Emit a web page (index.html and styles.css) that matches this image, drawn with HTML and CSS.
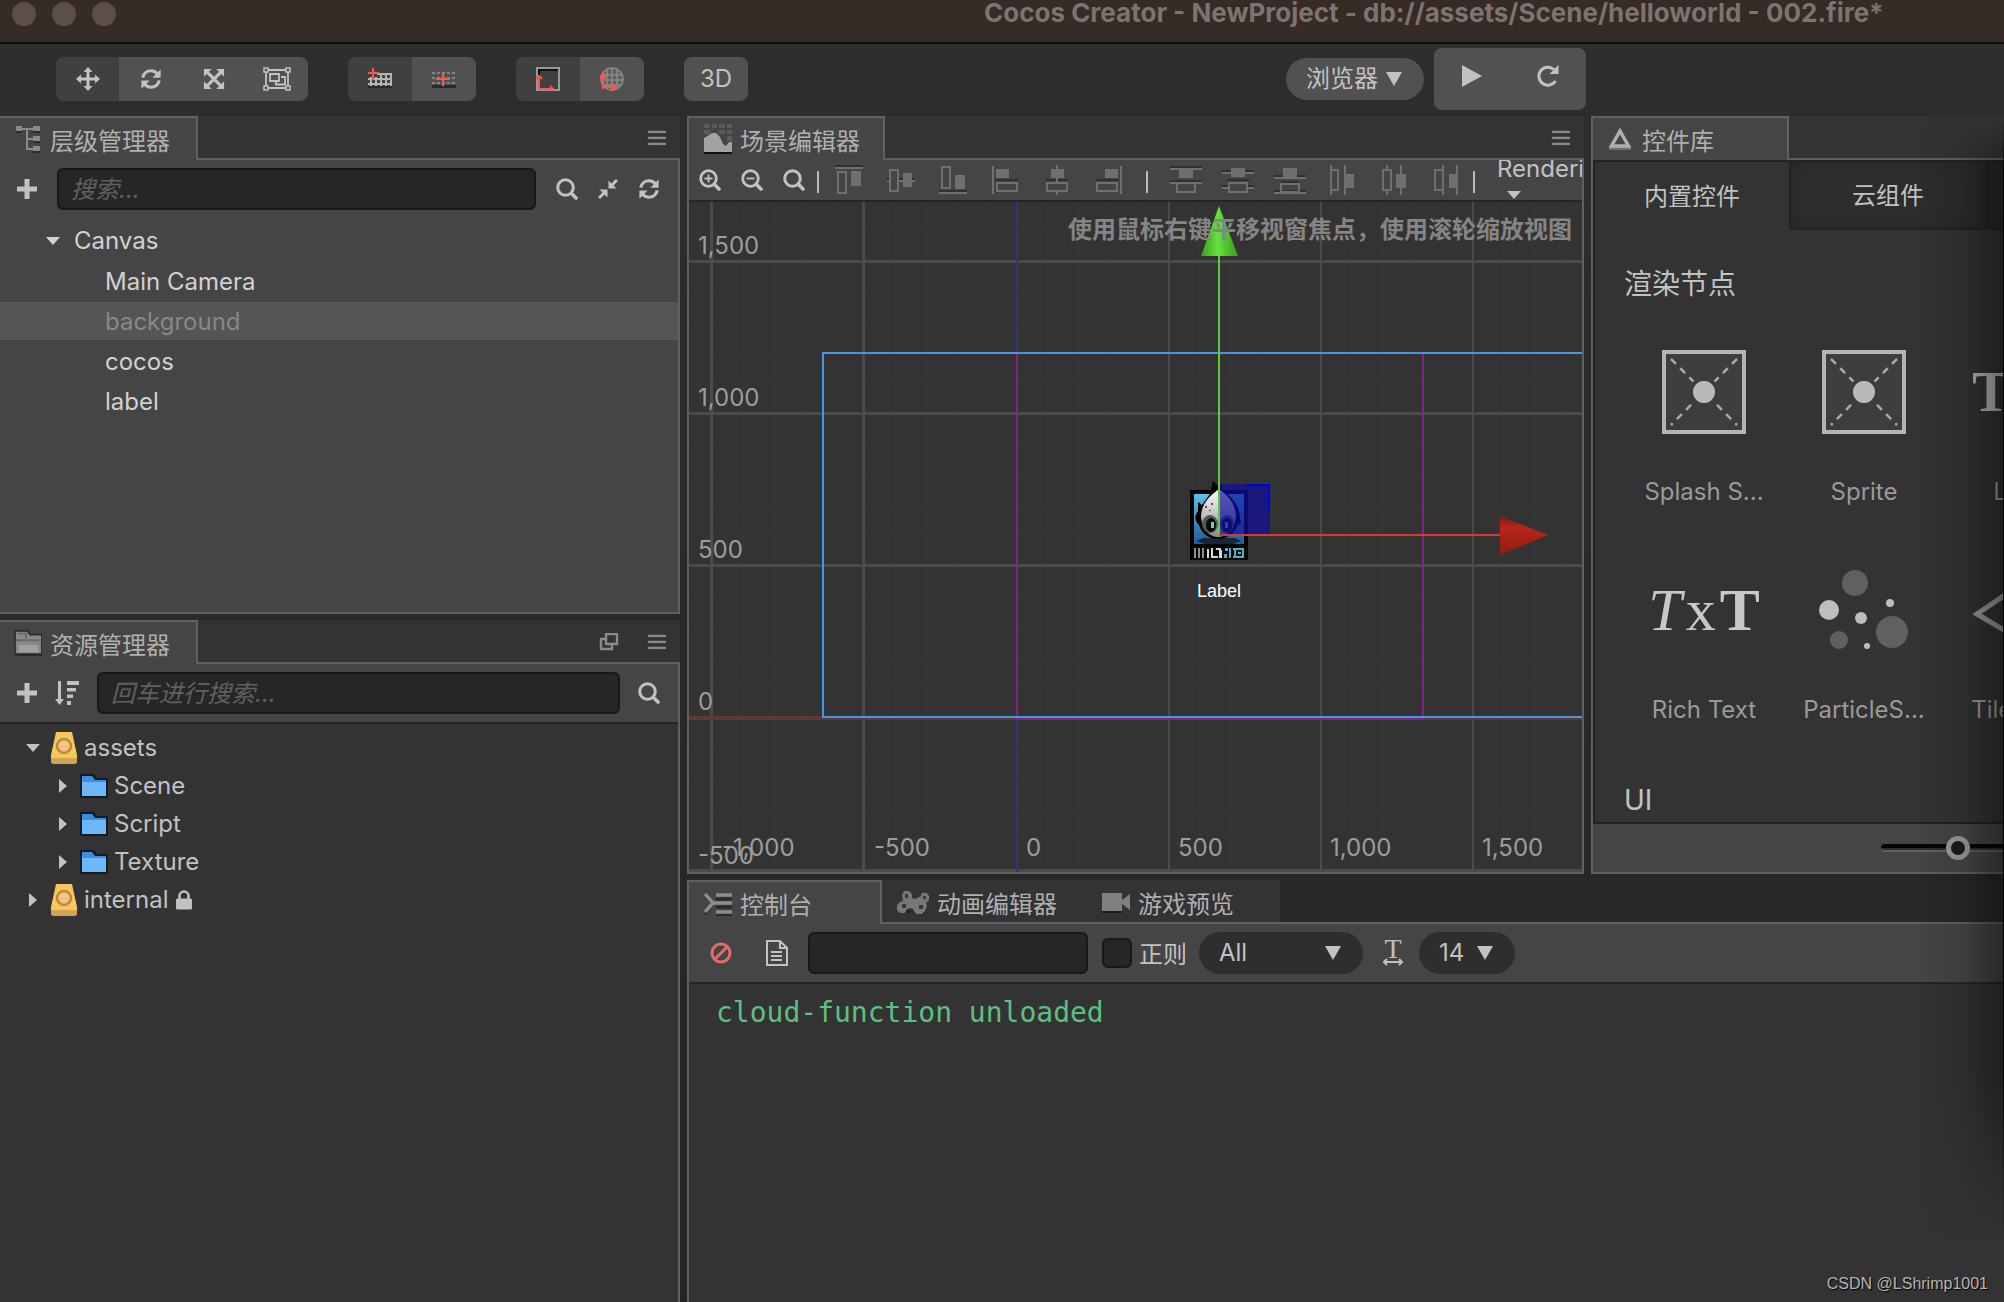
FILE: index.html
```html
<!DOCTYPE html>
<html lang="zh-CN">
<head>
  <meta charset="UTF-8" />
  <meta name="viewport" content="width=device-width, initial-scale=1.0" />
  <title>Cocos Creator - NewProject</title>
  <link rel="stylesheet" href="styles.css">
</head>
<body>
  <!-- shared icons -->
  <svg class="sprite" aria-hidden="true">
    <symbol id="i-move" viewBox="0 0 24 24"><path fill="currentColor" d="M12 0l4.500 5h-3v5.500H19V7.500l5 4.500-5 4.500v-3h-5.500V19h3L12 24l-4.500-5h3v-5.500H5v3L0 12l5-4.500v3h5.500V5h-3z"/></symbol>
    <symbol id="i-sync" viewBox="0 0 24 24"><path fill="none" stroke="currentColor" stroke-width="3.400" d="M3 10.500C4 5.500 8 3 12 3c3 0 5.500 1.400 7.500 3.800M21 13.500c-1 5-5 7.500-9 7.500-3 0-5.500-1.400-7.500-3.800"/><path fill="currentColor" d="M22.500 1.500v9h-9zM1.500 22.500v-9h9z"/></symbol>
    <symbol id="i-expand" viewBox="0 0 24 24"><path stroke="currentColor" stroke-width="3.600" d="M4 4l16 16M20 4L4 20"/><path fill="currentColor" d="M1 1h8.500L1 9.500zM23 1v8.500L14.500 1zM1 23v-8.500L9.500 23zM23 23h-8.500l8.500-8.500z"/></symbol>
    <symbol id="i-group" viewBox="0 0 28 24"><g fill="none" stroke="currentColor" stroke-width="1.800"><path d="M3 3h22v18H3z"/><path d="M7 7h9v7H7zM18 10h4v7.500h-9V15"/></g><g fill="#515151" stroke="currentColor" stroke-width="1.500"><path d="M1 1h4v4H1zM23 1h4v4h-4zM1 19h4v4H1zM23 19h4v4h-4z"/></g></symbol>
    <symbol id="i-pivot" viewBox="0 0 24 22"><path stroke="#2a2a2a" stroke-width="2" d="M0 19h24"/><path stroke="#b5b5b5" stroke-width="2" d="M3 5v13M8 5v13M13 5v13M18 5v13M23 5v13M0 6h24M0 11h24M0 16h24"/><path fill="#404040" d="M0 0h9v9H0z"/><path stroke="#f05a55" stroke-width="2" d="M5 0v12M0 5h11"/></symbol>
    <symbol id="i-center" viewBox="0 0 24 22"><path fill="#2a2a2a" d="M0 17h24v3H0z"/><path stroke="#858585" stroke-width="2" stroke-dasharray="3 2" d="M0 5h24M0 10h24M0 15h24"/><path stroke="#f05a55" stroke-width="2" d="M11 4v14M4 11h14"/></symbol>
    <symbol id="i-local" viewBox="0 0 24 24"><path fill="#404040" stroke="#999" stroke-width="2" d="M1 1h22v22H1z"/><path fill="none" stroke="#111" stroke-width="2" d="M3 22V3h19"/><path fill="none" stroke="#f05a55" stroke-width="2" d="M3 9v13h13M0 12l3-3 3 3M14 19l3 3-3 3"/></symbol>
    <symbol id="i-world" viewBox="0 0 24 24"><circle cx="12" cy="12" r="11" fill="#606060" stroke="#8a8a8a" stroke-width="1.500"/><path fill="none" stroke="#8a8a8a" stroke-width="1.500" d="M2 8h20M1 13h22M3 18h18M12 1v22M7 2v20M17 2v20"/><path fill="none" stroke="#f05a55" stroke-width="2.200" d="M3 8v14M0 11l3-4 3 4M3 20h12M12 17l4 3-4 4"/></symbol>
    <symbol id="i-play" viewBox="0 0 20 22"><path fill="currentColor" d="M0 0l20 11L0 22z"/></symbol>
    <symbol id="i-redo" viewBox="0 0 22 22"><path fill="none" stroke="currentColor" stroke-width="3" d="M18.500 16A9 9 0 1 1 17 4.500"/><path fill="currentColor" d="M21.500 0v9h-9z"/></symbol>
    <symbol id="i-caret" viewBox="0 0 16 14"><path fill="currentColor" d="M0 0h16L8 14z"/></symbol>
    <symbol id="i-open" viewBox="0 0 14 8"><path fill="currentColor" d="M0 0h14L7 8z"/></symbol>
    <symbol id="i-closed" viewBox="0 0 8 14"><path fill="currentColor" d="M0 0l8 7-8 7z"/></symbol>
    <symbol id="i-menu" viewBox="0 0 20 16"><path stroke="#222" stroke-width="2" d="M1 3h18M1 9h18M1 15h18"/><path stroke="currentColor" stroke-width="2.400" stroke-linecap="round" d="M2 2h16M2 8h16M2 14h16"/></symbol>
    <symbol id="i-popup" viewBox="0 0 20 18"><path fill="none" stroke="currentColor" stroke-width="2.400" d="M7 1h11v10H7zM7 6H2v10h11v-4"/></symbol>
    <symbol id="i-tree" viewBox="0 0 28 28"><g fill="#2c2c2c" transform="translate(2)"><path d="M0 6h6v2H0zM17 6h7v2h-7zM17 16h7v2h-7zM17 26h7v2h-7z"/></g><g fill="#8a8a8a" transform="translate(2)"><path d="M0 1h6v5H0zM17 1h7v5h-7zM17 11h7v5h-7zM17 21h7v5h-7zM6 3h11v2H6zM10 4h2v21h-2zM11 13h7v2h-7zM11 23h7v2h-7z"/></g></symbol>
    <symbol id="i-plus" viewBox="0 0 20 20"><path fill="currentColor" d="M7.500 0h5v7.500H20v5h-7.500V20h-5v-7.500H0v-5h7.500z"/></symbol>
    <symbol id="i-search" viewBox="0 0 22 22"><circle cx="9.500" cy="9.500" r="7.800" fill="none" stroke="currentColor" stroke-width="3"/><path stroke="currentColor" stroke-width="3.600" stroke-linecap="round" d="M15.500 15.500l4.500 4.500"/></symbol>
    <symbol id="i-zoomin" viewBox="0 0 22 22"><circle cx="9.500" cy="9.500" r="7.800" fill="none" stroke="currentColor" stroke-width="2.800"/><path stroke="currentColor" stroke-width="3.600" stroke-linecap="round" d="M15.500 15.500l4.500 4.500"/><path stroke="currentColor" stroke-width="1.800" d="M5.500 9.500h8M9.500 5.500v8"/></symbol>
    <symbol id="i-zoomout" viewBox="0 0 22 22"><circle cx="9.500" cy="9.500" r="7.800" fill="none" stroke="currentColor" stroke-width="2.800"/><path stroke="currentColor" stroke-width="3.600" stroke-linecap="round" d="M15.500 15.500l4.500 4.500"/><path stroke="currentColor" stroke-width="1.800" d="M5.500 9.500h8"/></symbol>
    <symbol id="i-collapse" viewBox="0 0 20 20"><path stroke="currentColor" stroke-width="3" d="M1 19l6-6M19 1l-6 6"/><path fill="currentColor" d="M1.500 10.500h8v8zM18.500 9.500h-8v-8z"/></symbol>
    <symbol id="i-folder-tab" viewBox="0 0 30 28"><path fill="#2a2a2a" d="M0 4V2l2-2h13l3 4h12v24H1z"/><path fill="#888" d="M2 25V2h12l3 4h12v19z"/><path fill="none" stroke="#696969" stroke-width="2" d="M2 11h27M4 4h9v5"/><path fill="#a0a0a0" d="M5 16h21v8H5z"/></symbol>
    <symbol id="i-sort" viewBox="0 0 24 24"><path fill="currentColor" d="M3 0h3v18h3l-4.500 6L0 18h3zM12 0h12v4H12zM12 7h9v3.500h-9zM12 13.500h6V17h-6zM12 20h4v4h-4z"/></symbol>
    <symbol id="i-db" viewBox="0 0 28 32"><path fill="#f6c75f" d="M6 0h16l5 23v7l-2 2H3l-2-2v-7z"/><path fill="#d3a451" d="M1 26h26v4l-2 2H3l-2-2z"/><circle cx="14" cy="14" r="7" fill="#f3c383" stroke="#ba8a3d" stroke-width="2.500"/></symbol>
    <symbol id="i-folder" viewBox="0 0 28 24"><path fill="#111c27" d="M0 0h14l3 4h11v20H0z"/><path fill="#3d8ee0" d="M2 2h10l3 4h11v4H2z"/><path fill="#6db8fb" d="M2 8h24v14H2z"/></symbol>
    <symbol id="i-lock" viewBox="0 0 16 20"><path fill="none" stroke="currentColor" stroke-width="2.500" d="M3.500 9V6a4.500 4.500 0 0 1 9 0v3"/><rect y="8.500" width="16" height="11" rx="1.500" fill="currentColor"/></symbol>
    <symbol id="i-scene" viewBox="0 0 28 30"><g fill="#5b5b5b"><path d="M0 0h6v4H0zM8 0h5v4H8zM15 0h6v4h-6zM23 0h5v4h-5zM0 6h6v4H0zM15 6h6v4h-6zM23 6h5v4h-5zM23 12h5v5h-5z"/></g><path fill="#111" d="M0 28h28v2H0z"/><path fill="#a2a2a2" d="M0 28V14l5-3 3-2h4l4 4 3 7 3 2 3-4h3v10z"/></symbol>
    <symbol id="i-widget" viewBox="0 0 26 24"><path fill="#707070" d="M1 19h22v4H1z"/><path fill="none" stroke="#b0b0b0" stroke-width="3.500" d="M12 4l8.500 15h-17z"/></symbol>
    <symbol id="i-console" viewBox="0 0 28 24"><path fill="none" stroke="#2a2a2a" stroke-width="3" d="M1 4l8 8-8 10M12 7h16M12 15h16M12 23h16"/><path fill="none" stroke="#8d8d8d" stroke-width="3.500" d="M1 2l8 9-8 9M12 3h16M9 11h19M12 20h16"/></symbol>
    <symbol id="i-anim" viewBox="0 0 32 24"><path fill="#242424" d="M2 19h12v3H2zM18 20h10v3H18z"/><path fill="#777" d="M7 0h5l3 3v4l3 1 6-3 1-3h5l2 3v4l-3 3 1 3-2 5-3 3h-6l-3-5-3-1-3 1-2 4H3l-3-3v-5l3-3 3-1-1-6z"/><path fill="#383838" d="M8 3h3v4H8zM5 13h4v4H5zM22 14h4v4h-4zM26 5h3v3h-3z"/></symbol>
    <symbol id="i-video" viewBox="0 0 28 20"><path fill="#1c1c1c" d="M0 17h20v3H0z"/><path fill="#808080" d="M0 0h20v18H0zM20 7l8-6v16l-8-6z"/></symbol>
    <symbol id="i-ban" viewBox="0 0 22 22"><circle cx="11" cy="11" r="9" fill="none" stroke="#e06c6c" stroke-width="3"/><path stroke="#e06c6c" stroke-width="3" d="M17 5L5 17"/></symbol>
    <symbol id="i-doc" viewBox="0 0 22 26"><path fill="none" stroke="currentColor" stroke-width="2" d="M1 1h13l7 7v17H1zM14 1v7h7M5 12h11M5 16h11M5 20h11"/></symbol>
    <symbol id="i-fontsize" viewBox="0 0 22 26"><text x="11" y="18" text-anchor="middle" font-family="Liberation Serif, serif" font-size="28" fill="#c0c0c0">T</text><path fill="none" stroke="#c0c0c0" stroke-width="2" d="M2 22h18M5 19l-3 3 3 3M17 19l3 3-3 3"/></symbol>
    <!-- align and distribute -->
    <symbol id="a-top" viewBox="0 0 28 30"><path fill="#303030" d="M0 0h28v2H0z"/><path fill="#6f6f6f" d="M0 2h28v2H0zM16 6h10v15H16z"/><path fill="none" stroke="#6f6f6f" stroke-width="2" d="M3 7h8v21H3z"/></symbol>
    <symbol id="a-mid" viewBox="0 0 28 30"><path fill="#303030" d="M0 13h28v2H0z"/><path fill="#6f6f6f" d="M0 15h28v2H0zM16 8h9v14h-9z"/><path fill="#454545" stroke="#6f6f6f" stroke-width="2" d="M3 5h8v21H3z"/></symbol>
    <symbol id="a-bottom" viewBox="0 0 28 30"><path fill="#303030" d="M0 25h28v2H0z"/><path fill="#6f6f6f" d="M0 27h28v2H0zM16 10h10v14H16z"/><path fill="none" stroke="#6f6f6f" stroke-width="2" d="M3 2h8v21H3z"/></symbol>
    <symbol id="a-left" viewBox="0 0 28 30"><path fill="#303030" d="M4 14h23v2H4z"/><path fill="#6f6f6f" d="M1 1h2v28H1zM5 4h13v9H5z"/><path fill="none" stroke="#6f6f6f" stroke-width="2" d="M6 18h20v8H6z"/></symbol>
    <symbol id="a-hmid" viewBox="0 0 28 30"><path fill="#303030" d="M3 14h23v2H3z"/><path fill="#6f6f6f" d="M13 0h2v30h-2zM8 4h13v9H8z"/><path fill="#454545" stroke="#6f6f6f" stroke-width="2" d="M4 18h20v8H4z"/></symbol>
    <symbol id="a-right" viewBox="0 0 28 30"><path fill="#303030" d="M1 14h23v2H1z"/><path fill="#6f6f6f" d="M25 1h2v28h-2zM10 4h13v9H10z"/><path fill="none" stroke="#6f6f6f" stroke-width="2" d="M2 18h20v8H2z"/></symbol>
    <symbol id="d-top" viewBox="0 0 32 30"><path fill="#303030" d="M0 1h32v2H0zM0 15h32v2H0z"/><path fill="#6f6f6f" d="M0 3h32v2H0zM0 17h32v2H0zM9 4h14v9H9z"/><path fill="none" stroke="#6f6f6f" stroke-width="2" d="M7 18h18v9H7z"/></symbol>
    <symbol id="d-mid" viewBox="0 0 32 30"><path fill="#303030" d="M0 5h32v2H0zM5 14h22v2H5zM0 20h32v2H0z"/><path fill="#6f6f6f" d="M0 7h32v2H0zM0 22h32v2H0zM9 3h14v9H9z"/><path fill="#454545" stroke="#6f6f6f" stroke-width="2" d="M7 18h18v9H7z"/></symbol>
    <symbol id="d-bottom" viewBox="0 0 32 30"><path fill="#303030" d="M0 10h32v2H0zM0 25h32v2H0zM7 16h18v2H7z"/><path fill="#6f6f6f" d="M0 12h32v2H0zM0 27h32v2H0zM9 3h14v9H9z"/><path fill="none" stroke="#6f6f6f" stroke-width="2" d="M7 19h18v8H7z"/></symbol>
    <symbol id="d-left" viewBox="0 0 28 30"><path fill="#6f6f6f" d="M2 0h2v30H2zM16 0h2v30h-2zM18 9h8v14h-8z"/><path fill="none" stroke="#6f6f6f" stroke-width="2" d="M3 5h7v20H3z"/></symbol>
    <symbol id="d-center" viewBox="0 0 28 30"><path fill="#6f6f6f" d="M6 0h2v30H6zM20 0h2v30h-2zM16 9h10v14H16z"/><path fill="#454545" stroke="#6f6f6f" stroke-width="2" d="M3 5h8v20H3z"/></symbol>
    <symbol id="d-right" viewBox="0 0 28 30"><path fill="#6f6f6f" d="M10 0h2v30h-2zM24 0h2v30h-2zM17 9h8v14h-8z"/><path fill="none" stroke="#6f6f6f" stroke-width="2" d="M3 5h8v20H3z"/></symbol>
    <!-- node library -->
    <symbol id="n-sprite" viewBox="0 0 84 84"><path fill="#3d3d3d" stroke="#b4b4b4" stroke-width="4" d="M2 2h80v80H2z"/><path stroke="#aaa" stroke-width="2.500" stroke-dasharray="7 6" d="M9 9l66 66M75 9L9 75"/><circle cx="42" cy="42" r="15" fill="#3d3d3d"/><circle cx="42" cy="42" r="11" fill="#b9b9b9"/></symbol>
    <symbol id="n-particle" viewBox="0 0 90 80"><g fill="#606060"><circle cx="36" cy="13" r="13"/><circle cx="73" cy="62" r="16"/><circle cx="20" cy="70" r="9"/></g><g fill="#bebebe"><circle cx="10" cy="40" r="10"/><circle cx="42" cy="48" r="6"/><circle cx="71" cy="33" r="4"/><circle cx="48" cy="76" r="3"/></g></symbol>
    <symbol id="n-tile" viewBox="0 0 104 64"><path fill="none" stroke="#9a9a9a" stroke-width="5" d="M5 36L52 4l47 32-47 28z"/></symbol>
  </svg>

  <header class="titlebar">
    <div class="lights"><i></i><i></i><i></i></div>
    <h1>Cocos Creator - NewProject - db://assets/Scene/helloworld - 002.fire*</h1>
  </header>

  <div class="toolbar">
    <div class="btn-group transform">
      <button class="on" aria-label="move"><svg width="24" height="24"><use href="#i-move"/></svg></button>
      <button aria-label="rotate"><svg width="22" height="22"><use href="#i-sync"/></svg></button>
      <button aria-label="scale"><svg width="22" height="22"><use href="#i-expand"/></svg></button>
      <button aria-label="rect"><svg width="28" height="24"><use href="#i-group"/></svg></button>
    </div>
    <div class="btn-group">
      <button class="on" aria-label="pivot"><svg width="24" height="22"><use href="#i-pivot"/></svg></button>
      <button aria-label="center"><svg width="24" height="22"><use href="#i-center"/></svg></button>
    </div>
    <div class="btn-group">
      <button class="on" aria-label="local"><svg width="24" height="24"><use href="#i-local"/></svg></button>
      <button aria-label="global"><svg width="24" height="24"><use href="#i-world"/></svg></button>
    </div>
    <div class="btn-group"><button>3D</button></div>
    <div class="preview">
      <div class="select pill-light">
        <select aria-label="preview"><option>浏览器</option></select>
        <svg width="16" height="14"><use href="#i-caret"/></svg>
      </div>
      <div class="play-box">
        <button aria-label="play"><svg width="20" height="22"><use href="#i-play"/></svg></button>
        <button aria-label="reload"><svg width="22" height="22"><use href="#i-redo"/></svg></button>
      </div>
    </div>
  </div>

  <main class="dock">
    <div class="left">
      <section class="panel open-left">
        <div class="tabs">
          <div class="tab active"><svg width="28" height="28"><use href="#i-tree"/></svg>层级管理器</div>
          <div class="tab-tools"><svg width="20" height="16"><use href="#i-menu"/></svg></div>
        </div>
        <div class="search-bar">
          <button aria-label="add"><svg width="20" height="20"><use href="#i-plus"/></svg></button>
          <input type="text" class="field" placeholder="搜索..." aria-label="搜索">
          <button aria-label="search"><svg width="22" height="22"><use href="#i-search"/></svg></button>
          <button aria-label="collapse"><svg width="20" height="20"><use href="#i-collapse"/></svg></button>
          <button aria-label="refresh"><svg width="22" height="22"><use href="#i-sync"/></svg></button>
        </div>
        <ul class="nodes">
          <li class="root"><svg width="14" height="8"><use href="#i-open"/></svg>Canvas</li>
          <li>Main Camera</li>
          <li class="selected">background</li>
          <li>cocos</li>
          <li>label</li>
        </ul>
      </section>

      <section class="panel open-left dark">
        <div class="tabs">
          <div class="tab active"><svg width="28" height="28"><use href="#i-folder-tab"/></svg>资源管理器</div>
          <div class="tab-tools">
            <svg width="20" height="18"><use href="#i-popup"/></svg>
            <svg width="20" height="16"><use href="#i-menu"/></svg>
          </div>
        </div>
        <div class="search-bar line">
          <button aria-label="add"><svg width="20" height="20"><use href="#i-plus"/></svg></button>
          <button aria-label="sort"><svg width="24" height="24"><use href="#i-sort"/></svg></button>
          <input type="text" class="field" placeholder="回车进行搜索..." aria-label="回车进行搜索">
          <button aria-label="search"><svg width="22" height="22"><use href="#i-search"/></svg></button>
        </div>
        <ul class="assets">
          <li><span class="arrow"><svg width="14" height="8"><use href="#i-open"/></svg></span><svg width="28" height="32"><use href="#i-db"/></svg>assets</li>
          <li class="sub"><span class="arrow"><svg width="8" height="14"><use href="#i-closed"/></svg></span><svg width="28" height="24"><use href="#i-folder"/></svg>Scene</li>
          <li class="sub"><span class="arrow"><svg width="8" height="14"><use href="#i-closed"/></svg></span><svg width="28" height="24"><use href="#i-folder"/></svg>Script</li>
          <li class="sub"><span class="arrow"><svg width="8" height="14"><use href="#i-closed"/></svg></span><svg width="28" height="24"><use href="#i-folder"/></svg>Texture</li>
          <li><span class="arrow"><svg width="8" height="14"><use href="#i-closed"/></svg></span><svg width="28" height="32"><use href="#i-db"/></svg>internal<svg class="lock" width="16" height="20"><use href="#i-lock"/></svg></li>
        </ul>
      </section>
    </div>

    <div class="right">
      <div class="top">
        <section class="panel">
          <div class="tabs">
            <div class="tab active pad"><svg width="28" height="30"><use href="#i-scene"/></svg>场景编辑器</div>
            <div class="tab-tools"><svg width="20" height="16"><use href="#i-menu"/></svg></div>
          </div>
          <div class="scene-bar">
            <div class="zooms">
              <button aria-label="zoom in"><svg width="22" height="22"><use href="#i-zoomin"/></svg></button>
              <button aria-label="zoom out"><svg width="22" height="22"><use href="#i-zoomout"/></svg></button>
              <button aria-label="zoom reset"><svg width="22" height="22"><use href="#i-search"/></svg></button>
            </div>
            <div class="aligns">
              <button aria-label="align top"><svg width="28" height="30"><use href="#a-top"/></svg></button>
              <button aria-label="align middle"><svg width="28" height="30"><use href="#a-mid"/></svg></button>
              <button aria-label="align bottom"><svg width="28" height="30"><use href="#a-bottom"/></svg></button>
              <button aria-label="align left"><svg width="28" height="30"><use href="#a-left"/></svg></button>
              <button aria-label="align center"><svg width="28" height="30"><use href="#a-hmid"/></svg></button>
              <button aria-label="align right"><svg width="28" height="30"><use href="#a-right"/></svg></button>
            </div>
            <div class="aligns last">
              <button aria-label="distribute top"><svg width="32" height="30"><use href="#d-top"/></svg></button>
              <button aria-label="distribute middle"><svg width="32" height="30"><use href="#d-mid"/></svg></button>
              <button aria-label="distribute bottom"><svg width="32" height="30"><use href="#d-bottom"/></svg></button>
              <button aria-label="distribute left"><svg width="28" height="30"><use href="#d-left"/></svg></button>
              <button aria-label="distribute center"><svg width="28" height="30"><use href="#d-center"/></svg></button>
              <button aria-label="distribute right"><svg width="28" height="30"><use href="#d-right"/></svg></button>
            </div>
            <button class="rendering">Rendering<svg width="14" height="8"><use href="#i-open"/></svg></button>
          </div>
          <div class="scene">
            <svg class="scene-view">
              <defs>
                <pattern id="minor" x="23" y="59" width="30.400" height="30.400" patternUnits="userSpaceOnUse"><path d="M0 .5h31M.5 0v31" stroke="#363636"/></pattern>
                <linearGradient id="green"><stop offset="0" stop-color="#3a9a22"/><stop offset=".45" stop-color="#66e33c"/><stop offset="1" stop-color="#3a9a22"/></linearGradient>
                <linearGradient id="red" x2="0" y2="1"><stop offset="0" stop-color="#7c1a12"/><stop offset=".3" stop-color="#b82619"/><stop offset="1" stop-color="#8f1c12"/></linearGradient>
                <linearGradient id="sky" x2="0" y2="1"><stop offset="0" stop-color="#5cc3e6"/><stop offset="1" stop-color="#235a9c"/></linearGradient>
                <linearGradient id="face" x2="0" y2="1"><stop offset="0" stop-color="#fff"/><stop offset="1" stop-color="#8a8a8a"/></linearGradient>
              </defs>
              <rect width="100%" height="100%" fill="url(#minor)"/>
              <g fill="#4b4b4b">
                <rect x="21" width="3" height="100%"/><rect x="173" width="3" height="100%"/><rect x="479" width="2" height="100%"/><rect x="631" width="2" height="100%"/><rect x="783" width="2" height="100%"/>
                <rect y="58" width="100%" height="3"/><rect y="210" width="100%" height="3"/><rect y="362" width="100%" height="3"/><rect y="667" width="100%" height="3"/>
              </g>
              <rect x="327" width="2" height="100%" fill="#352f80"/>
              <rect y="514" width="100%" height="4" fill="#613838"/>
              <path d="M328 151v366h406V151" fill="none" stroke="#80268a" stroke-width="2"/>
              <path d="M2000 151H134v364h1866" fill="none" stroke="#4a94e6" stroke-width="2"/>
              <!-- cocos sprite -->
              <g>
                <rect x="501" y="288" width="58" height="70" fill="#000"/>
                <rect x="505" y="292" width="50" height="50" fill="url(#sky)"/>
                <path fill="#16263c" d="M514 336h32l6 3-8 3h-28l-8-3z"/>
                <path fill="#000" d="M524 279l6 6 3-3v6c11 7 18 17 18 29 2 2 1 5-2 6-5 10-12 14-20 14-9 0-16-5-19-14-4-3-5-9-1-14v-9l4 3 8-11z"/>
                <path fill="url(#face)" d="M530 287c10 7 17 16 17 28-2 12-9 20-18 20s-16-8-17-20c0-12 8-21 18-28z"/>
                <path fill="#555" d="M516 304h2v2h-2zM522 301h2v2h-2zM514 300h1v2h-1zM520 308h2v1h-2z"/>
                <ellipse cx="521" cy="322" rx="8" ry="9" fill="#555"/><ellipse cx="538" cy="322" rx="7" ry="9" fill="#555"/>
                <ellipse cx="522" cy="323" rx="5" ry="7" fill="#0a0a0a"/><ellipse cx="538" cy="323" rx="5" ry="7" fill="#0a0a0a"/>
                <path fill="#58d4dc" d="M522 320h3v6h-3zM536 320h3v6h-3z"/>
                <path fill="#8e8e8e" d="M505 346h2v10h-2zM509 346h2v10h-2zM513 346h2v10h-2z"/>
                <path fill="#d8d8d8" d="M518 347h2v9h-2zM522 346h2v8h5v2h-7zM527 346h5v2h-5zM530 348h3v8h-3z"/>
                <path fill="#4bb0c8" d="M536 346h3v3h-3zM535 352h3v4h-3zM540 346h2v10h-2zM544 346h11v2h-11zM544 354h11v2h-11zM545 348h2v6h-2zM549 350h3v2h-3zM553 348h2v6h-2z"/>
              </g>
              <rect x="530" y="282" width="51" height="51" fill="#0d0d9c" fill-opacity=".7"/>
              <path d="M556 283h24v25" fill="none" stroke="#0000f0" stroke-width="2"/>
              <rect x="529" y="50" width="2" height="284" fill="#5fc93f"/>
              <path d="M530 4l19 50h-37z" fill="url(#green)"/>
              <rect x="530" y="332" width="282" height="2" fill="#d63a2e"/>
              <path d="M811 314l48 19-48 20z" fill="url(#red)"/>
              <text class="node-label" x="530" y="395" text-anchor="middle">Label</text>
              <g class="ruler">
                <text x="9" y="52">1,500</text><text x="9" y="204">1,000</text><text x="9" y="356">500</text><text x="9" y="508">0</text><text x="9" y="662">-500</text>
                <text x="33" y="654">-1,000</text><text x="185" y="654">-500</text><text x="337" y="654">0</text><text x="489" y="654">500</text><text x="641" y="654">1,000</text><text x="793" y="654">1,500</text>
              </g>
            </svg>
            <p class="hint">使用鼠标右键平移视窗焦点，使用滚轮缩放视图</p>
          </div>
        </section>

        <section class="panel open-right">
          <div class="tabs">
            <div class="tab active pad"><svg width="26" height="24"><use href="#i-widget"/></svg>控件库</div>
          </div>
          <div class="library">
            <div class="lib-tabs">
              <button class="current">内置控件</button>
              <button>云组件</button>
              <button aria-label="more"></button>
            </div>
            <h2>渲染节点</h2>
            <div class="lib-grid">
              <figure><svg width="84" height="84"><use href="#n-sprite"/></svg><figcaption>Splash S...</figcaption></figure>
              <figure><svg width="84" height="84"><use href="#n-sprite"/></svg><figcaption>Sprite</figcaption></figure>
              <figure><div class="glyph"><b>Text</b></div><figcaption>Label</figcaption></figure>
              <figure><div class="glyph rich"><em>T</em><span>x</span><b>T</b></div><figcaption>Rich Text</figcaption></figure>
              <figure><svg width="90" height="84"><use href="#n-particle"/></svg><figcaption>ParticleS...</figcaption></figure>
              <figure><svg width="104" height="84"><use href="#n-tile"/></svg><figcaption>TiledMap</figcaption></figure>
            </div>
            <h2>UI</h2>
          </div>
          <div class="lib-foot"><input type="range" min="0" max="100" value="37" aria-label="size"></div>
        </section>
      </div>

      <section class="panel dark open-right console">
        <div class="tabs">
          <div class="tab active pad"><svg width="28" height="24"><use href="#i-console"/></svg>控制台</div>
          <div class="tab pad"><svg width="32" height="24"><use href="#i-anim"/></svg>动画编辑器</div>
          <div class="tab pad"><svg width="28" height="20"><use href="#i-video"/></svg>游戏预览</div>
        </div>
        <div class="console-bar">
          <button aria-label="clear"><svg width="22" height="22"><use href="#i-ban"/></svg></button>
          <button aria-label="log"><svg width="22" height="26"><use href="#i-doc"/></svg></button>
          <input type="text" class="field filter" aria-label="filter">
          <label class="check"><input type="checkbox"><span>正则</span></label>
          <div class="select level">
            <select aria-label="level"><option>All</option></select>
            <svg width="16" height="14"><use href="#i-caret"/></svg>
          </div>
          <svg width="22" height="26"><use href="#i-fontsize"/></svg>
          <div class="select size">
            <select aria-label="font size"><option>14</option></select>
            <svg width="16" height="14"><use href="#i-caret"/></svg>
          </div>
        </div>
        <pre class="log">cloud-function unloaded</pre>
      </section>
    </div>
  </main>
  <div class="edge"></div>
  <div class="watermark">CSDN @LShrimp1001</div>
</body>
</html>
```
FILE: styles.css
```css
* {
  box-sizing: border-box;
}
body {
  margin: 0;
  height: 100vh;
  display: flex;
  flex-direction: column;
  overflow: hidden;
  background: linear-gradient(#2e2e2e, #242424);
  color: #c2c2c2;
  font-family: Inter, "Noto Sans CJK SC", sans-serif;
  font-size: 24px;
  line-height: 30px;
}
button, input, select {
  font: inherit;
  color: inherit;
}
button {
  display: flex;
  align-items: center;
  justify-content: center;
  padding: 0;
  border: 0;
  background: none;
}
svg {
  flex: none;
}
ul {
  margin: 0;
  padding: 0;
  list-style: none;
}
.sprite {
  position: absolute;
  width: 0;
  height: 0;
}

/* title bar */
.titlebar {
  display: flex;
  height: 44px;
  flex: none;
  background: #352b27;
  border-bottom: 2px solid #0c0c0c;
}
.lights {
  display: flex;
  gap: 16px;
  padding: 2px 0 0 12px;
  width: 984px;
}
.lights i {
  width: 24px;
  height: 24px;
  border-radius: 50%;
  background: #5a4f4b;
}
.titlebar h1 {
  margin: 0;
  font-size: 26px;
  line-height: 26px;
  font-weight: 700;
  color: #7d7370;
  white-space: nowrap;
}

/* main toolbar */
.toolbar {
  display: flex;
  align-items: center;
  gap: 40px;
  flex: none;
  height: 72px;
  padding: 0 418px 2px 56px;
}
.btn-group {
  display: flex;
  height: 44px;
  border-radius: 8px;
  overflow: hidden;
  background: #515151;
}
.btn-group button {
  width: 64px;
}
.transform button {
  width: 63px;
}
.btn-group .on {
  background: #404040;
}
.preview {
  display: flex;
  align-items: center;
  gap: 10px;
  margin-left: auto;
}
.play-box {
  display: flex;
  width: 152px;
  height: 62px;
  padding-bottom: 6px;
  border-radius: 8px;
  background: #515151;
}
.play-box button {
  flex: 1;
}

/* selects */
.select {
  position: relative;
  height: 42px;
}
.select select {
  width: 100%;
  height: 100%;
  padding: 0 20px;
  border: 0;
  border-radius: 21px;
  appearance: none;
  background: #2e2e2e;
}
.select svg {
  position: absolute;
  right: 22px;
  top: 14px;
  pointer-events: none;
}
.pill-light {
  width: 138px;
}
.pill-light select {
  background: #515151;
}
.level {
  width: 164px;
}
.size {
  width: 96px;
}

/* dock layout */
.dock {
  flex: 1;
  min-height: 0;
  display: grid;
  grid-template-columns: minmax(0, 680fr) minmax(0, 1317fr);
  gap: 7px;
}
.left, .right {
  display: grid;
  gap: 6px;
  min-height: 0;
}
.left {
  grid-template-rows: minmax(0, 498fr) minmax(0, 682fr);
}
.right {
  grid-template-rows: minmax(0, 758fr) minmax(0, 422fr);
}
.top {
  display: grid;
  grid-template-columns: minmax(0, 897fr) minmax(0, 413fr);
  gap: 7px;
}
.panel {
  display: flex;
  flex-direction: column;
  min-width: 0;
  min-height: 0;
  background: #454545;
  border: 2px solid #606060;
  border-top: 0;
}
.panel.dark {
  background: #333;
  border-bottom: 0;
}
.open-left {
  border-left: 0;
}
.open-right {
  border-right: 0;
}

/* tabs */
.tabs {
  display: flex;
  flex: none;
  height: 44px;
  margin: 0 -2px;
  background: #333;
  box-shadow: inset 0 -2px #606060;
}
.open-left .tabs {
  margin-left: 0;
}
.open-right .tabs {
  margin-right: 0;
}
.tab {
  display: flex;
  align-items: center;
  gap: 8px;
  height: 42px;
  padding: 8px 0 0 14px;
  color: #b0b0b0;
  white-space: nowrap;
}
.tab.pad {
  padding-left: 15px;
}
.tab.active {
  width: 198px;
  height: 44px;
  background: #454545;
  border: 2px solid #606060;
  border-bottom: 0;
  padding-top: 6px;
}
.tab svg {
  margin-top: -6px;
}
.open-left .tab.active {
  border-left: 0;
}
.tab-tools {
  display: flex;
  align-items: center;
  gap: 28px;
  margin-left: auto;
  padding: 0 13px 1px 0;
  color: #8a8a8a;
}

/* search bars */
.search-bar {
  display: flex;
  align-items: center;
  gap: 20px;
  height: 56px;
  padding: 2px 18px 0 17px;
}
.search-bar.line {
  gap: 18px;
  height: 60px;
  padding-top: 0;
  background: #454545;
  border-bottom: 2px solid #262626;
}
.field {
  flex: 1;
  min-width: 0;
  height: 42px;
  padding: 0 12px;
  background: #262626;
  border: 2px solid #181818;
  border-radius: 6px;
}
.field::placeholder {
  color: #606060;
  font-style: italic;
}

/* trees */
.nodes {
  padding-top: 6px;
  color: #d2d2d2;
}
.nodes li {
  height: 38px;
  margin-bottom: 2px;
  padding-left: 105px;
  line-height: 40px;
}
.nodes .root {
  display: flex;
  align-items: center;
  gap: 14px;
  padding-left: 46px;
}
.nodes .selected {
  background: #555;
  color: #888;
}
.assets {
  padding-top: 5px;
}
.assets li {
  display: flex;
  align-items: center;
  gap: 6px;
  height: 38px;
  padding-left: 22px;
}
.assets .sub {
  padding-left: 52px;
}
.arrow {
  display: flex;
  justify-content: center;
  width: 22px;
}
.lock {
  margin-left: 2px;
}

/* scene editor */
.scene-bar {
  display: flex;
  flex: none;
  height: 42px;
  overflow: hidden;
  border-bottom: 2px solid #262626;
}
.zooms, .aligns {
  display: flex;
  flex: none;
  position: relative;
}
.zooms {
  padding-right: 8px;
}
.zooms button {
  width: 42px;
}
.aligns {
  padding-right: 12px;
}
.aligns.last {
  padding: 0 2px 0 13px;
}
.aligns button {
  width: 52px;
}
.zooms::after, .aligns::after {
  content: "";
  position: absolute;
  right: 4px;
  top: 11px;
  width: 2px;
  height: 22px;
  background: #b8b8b8;
}
.aligns::after {
  right: -1px;
}
.rendering {
  flex: none;
  display: block;
  margin-left: 23px;
  line-height: 16px;
  text-align: left;
}
.rendering svg {
  display: block;
  margin: 14px 0 0 10px;
}
.scene {
  position: relative;
  flex: 1;
  min-height: 0;
  overflow: hidden;
  background: #333;
}
.scene-view {
  display: block;
  width: 100%;
  height: 100%;
}
.ruler {
  fill: #9d9d9d;
}
.node-label {
  fill: #fff;
  font-family: "Liberation Sans", Arial, sans-serif;
  font-size: 18px;
}
.hint {
  position: absolute;
  top: 13px;
  right: 10px;
  margin: 0;
  font-weight: 700;
  color: #858585;
}

/* node library */
.library {
  flex: 1;
  min-height: 0;
  overflow: hidden;
  background: #333;
  border: 1px solid #222;
  border-width: 2px 0 2px 2px;
}
.lib-tabs {
  display: flex;
}
.lib-tabs button {
  flex: none;
  width: 198px;
  height: 68px;
  padding-top: 2px;
  background: #2d2d2d;
  border: 2px solid #232323;
  border-top: 0;
  border-radius: 0 0 4px 4px;
  box-shadow: inset 0 0 16px #262626;
}
.lib-tabs .current {
  width: 194px;
  background: none;
  border: 0;
  box-shadow: none;
}
.library h2 {
  margin: 36px 0 0 29px;
  font-size: 28px;
  line-height: 36px;
  font-weight: 400;
}
.lib-grid {
  display: grid;
  grid-template-columns: repeat(3, 160px);
  margin-left: 29px;
  padding-top: 48px;
  height: 444px;
}
figure {
  display: flex;
  flex-direction: column;
  align-items: center;
  gap: 43px;
  width: 160px;
  height: 218px;
  margin: 0;
  color: #9a9a9a;
}
.glyph {
  display: flex;
  align-items: center;
  justify-content: center;
  height: 84px;
  color: #b4b4b4;
  font-family: "Liberation Serif", serif;
  font-size: 56px;
  line-height: 84px;
}
.glyph.rich {
  align-items: baseline;
  gap: 4px;
  font-size: 60px;
  color: #c8c8c8;
}
.lib-foot {
  display: flex;
  align-items: center;
  flex: none;
  height: 48px;
  padding-left: 70%;
  overflow: hidden;
}
.lib-foot input {
  flex: none;
  width: 200px;
  height: 24px;
  margin: 0;
  appearance: none;
  background: none;
}
.lib-foot input::-webkit-slider-runnable-track {
  height: 8px;
  border-top: 4px solid #050505;
  border-bottom: 2px solid #606060;
  border-radius: 4px;
  background: #2e2e2e;
}
.lib-foot input::-webkit-slider-thumb {
  appearance: none;
  width: 24px;
  height: 24px;
  margin-top: -12px;
  border: 5px solid #9a9a9a;
  border-radius: 50%;
  background: #1c1c1c;
}

/* console */
.console .tabs {
  background: #292929;
}
.console .tab {
  height: 42px;
  background: #333;
  padding-right: 30px;
}
.console .tab:last-child {
  padding-right: 46px;
}
.console .tab.active {
  width: 195px;
  height: 44px;
  background: #454545;
}
.console .tab svg {
  margin-top: -4px;
}
.console-bar {
  display: flex;
  align-items: center;
  flex: none;
  height: 60px;
  padding-left: 21px;
  background: #454545;
  border-bottom: 2px solid #262626;
}
.console-bar button {
  width: 22px;
  margin-right: 34px;
}
.console-bar button + button {
  margin-right: 20px;
}
.filter {
  flex: none;
  width: 280px;
}
.check {
  display: flex;
  align-items: center;
  gap: 7px;
  margin: 0 12px 0 14px;
}
.check span {
  padding-top: 4px;
}
.check input {
  width: 30px;
  height: 30px;
  margin: 0;
  appearance: none;
  background: #262626;
  border: 2px solid #181818;
  border-radius: 6px;
}
.console-bar > svg {
  margin: 0 15px 0 19px;
}
.log {
  margin: 0;
  padding: 12px 27px;
  font-family: "DejaVu Sans Mono", monospace;
  font-size: 28px;
  line-height: 34px;
  color: #5dbf82;
}

/* window edge shade */
.edge {
  position: absolute;
  top: 116px;
  right: 0;
  bottom: 60px;
  width: 84px;
  border-right: 1px solid #000;
  background: linear-gradient(to right, transparent, rgba(0, 0, 0, 0.1) 50%, rgba(0, 0, 0, 0.4));
  pointer-events: none;
  mask-image: linear-gradient(transparent, #000 60px, #000 85%, transparent);
}
.watermark {
  position: absolute;
  right: 16px;
  bottom: 7px;
  font-family: "Liberation Sans", Arial, sans-serif;
  font-size: 16px;
  line-height: 22px;
  color: #b5b5b5;
  text-shadow: 1px 1px 1px #000;
}
```
